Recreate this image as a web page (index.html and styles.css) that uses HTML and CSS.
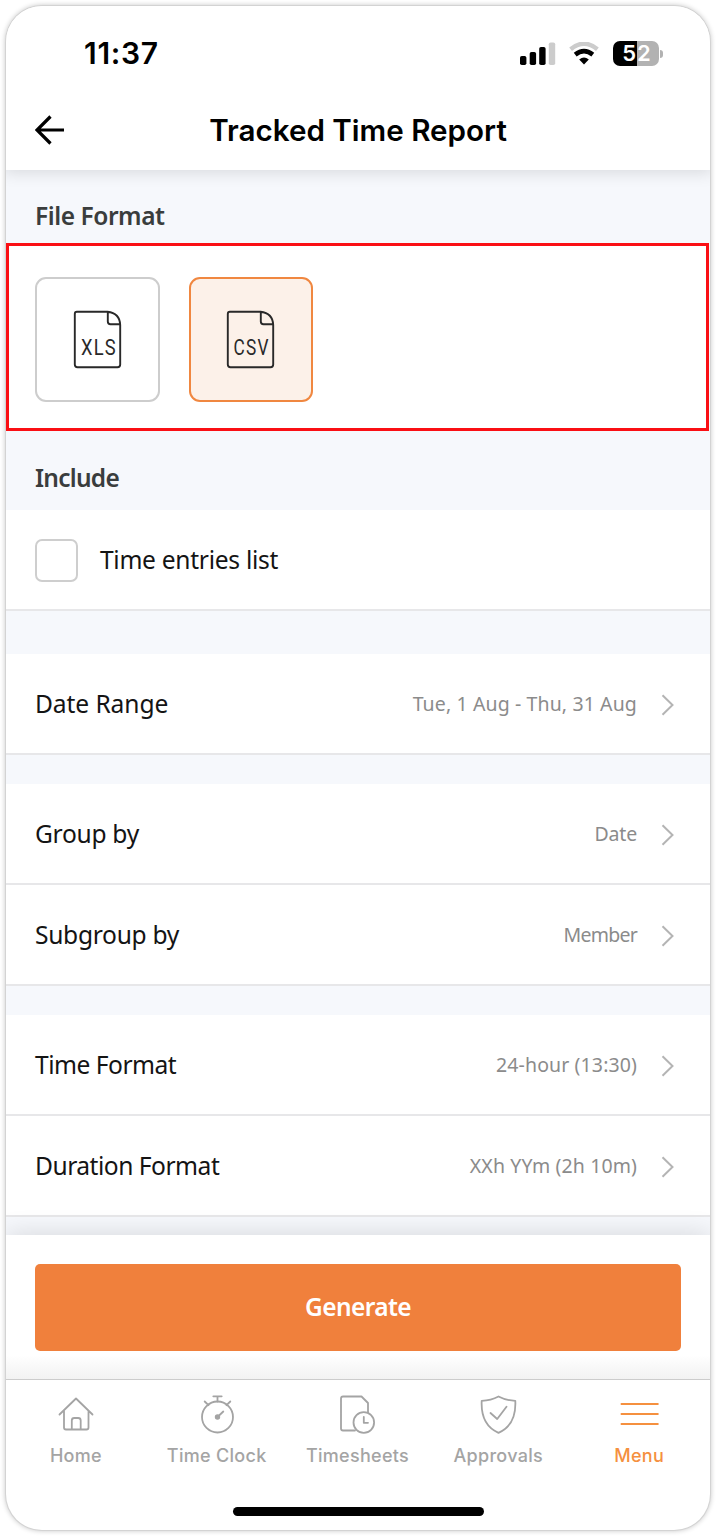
FILE: index.html
```html
<!DOCTYPE html>
<html lang="en">
<head>
<meta charset="utf-8">
<title>Tracked Time Report</title>
<link rel="stylesheet" href="styles.css">
</head>
<body>
<div class="phone">
  <header class="header">
    <div class="status">
      <span class="clock">11:37</span>
      <div class="status-icons">
        <svg width="36" height="24" viewBox="0 0 36 24"><rect x="0" y="14" width="6.4" height="9" rx="1.8"/><rect x="9.7" y="10" width="6.4" height="13" rx="1.8"/><rect x="19.2" y="5" width="6.4" height="18" rx="1.8"/><rect x="28.8" y="0.500" width="6.4" height="22.500" rx="1.8" fill="#ccc"/></svg>
        <svg class="wifi" width="30" height="24" viewBox="0 0 30 24"><path d="M1.600 7.200Q15-3.800 28.400 7.200" fill="none" stroke="#ccc" stroke-width="4.400"/><path d="M6.200 12.600Q15 5.800 23.800 12.600" fill="none" stroke="#000" stroke-width="4.600"/><path d="M10.200 17.600Q15 13.600 19.800 17.600L15 22.600Z"/></svg>
        <div class="battery"><span class="level">5</span><span class="rest">2</span></div>
        <i class="battery-cap"></i>
      </div>
    </div>
    <div class="titlebar">
      <svg class="back" width="30" height="30" viewBox="0 0 30 30"><path d="M29 15H2M15.500 1.500 2 15 15.500 28.500" fill="none" stroke="#000" stroke-width="3.200"/></svg>
      <h1 class="title">Tracked Time Report</h1>
    </div>
  </header>

  <main class="content">
    <h2 class="section section-first">File Format</h2>
    <div class="formats">
      <div class="format">
        <svg width="50" height="60" viewBox="0 0 50 60"><path d="M3.800 1.700H34.500Q46.800 3 47.200 15V54.500Q47.200 57.200 44.500 57.200H4.500Q1.800 57.200 1.800 54.500V4Q1.800 1.700 3.800 1.700ZM34.800 1.800V11.500Q34.800 14.200 37.500 14.200H47" /><text x="8" y="45.400" textLength="36" lengthAdjust="spacingAndGlyphs">XLS</text></svg>
      </div>
      <div class="format selected">
        <svg width="50" height="60" viewBox="0 0 50 60"><path d="M3.800 1.700H34.500Q46.800 3 47.200 15V54.500Q47.200 57.200 44.500 57.200H4.500Q1.800 57.200 1.800 54.500V4Q1.800 1.700 3.800 1.700ZM34.800 1.800V11.500Q34.800 14.200 37.500 14.200H47" /><text x="7.600" y="45.400" textLength="36" lengthAdjust="spacingAndGlyphs">CSV</text></svg>
      </div>
    </div>
    <h2 class="section section-include">Include</h2>
    <div class="row row-check"><i class="checkbox"></i><span class="label">Time entries list</span></div>

    <div class="group group-date">
      <div class="row"><span class="label label-date">Date Range</span><span class="value">Tue, 1 Aug - Thu, 31 Aug</span><svg class="chev" width="14" height="24" viewBox="0 0 14 24"><path d="M1.500 2.200 11.500 12 1.500 21.800"/></svg></div>
    </div>
    <div class="group">
      <div class="row"><span class="label">Group by</span><span class="value value-word">Date</span><svg class="chev" width="14" height="24" viewBox="0 0 14 24"><path d="M1.500 2.200 11.500 12 1.500 21.800"/></svg></div>
      <div class="row"><span class="label">Subgroup by</span><span class="value value-member">Member</span><svg class="chev" width="14" height="24" viewBox="0 0 14 24"><path d="M1.500 2.200 11.500 12 1.500 21.800"/></svg></div>
    </div>
    <div class="group">
      <div class="row"><span class="label label-format">Time Format</span><span class="value">24-hour (13:30)</span><svg class="chev" width="14" height="24" viewBox="0 0 14 24"><path d="M1.500 2.200 11.500 12 1.500 21.800"/></svg></div>
      <div class="row"><span class="label label-format">Duration Format</span><span class="value">XXh YYm (2h 10m)</span><svg class="chev" width="14" height="24" viewBox="0 0 14 24"><path d="M1.500 2.200 11.500 12 1.500 21.800"/></svg></div>
    </div>
  </main>

  <div class="action"><button class="generate">Generate</button></div>

  <nav class="tabs">
    <a class="tab"><svg width="40" height="40" viewBox="0 0 40 40"><path d="M3.500 19.500 20 3.500 36.500 19.500M8 16V32.500Q8 34.500 10 34.500H30.500Q32.500 34.500 32.500 32.500V16M15.800 34V25.500Q15.800 23 18.300 23H22.200Q24.700 23 24.700 25.500V34"/></svg><span>Home</span></a>
    <a class="tab"><svg width="40" height="40" viewBox="0 0 40 40"><circle cx="20.500" cy="22" r="15.500"/><path d="M20.500 6.500V1.300M16.300 1.300H24.700M7.700 6.500 11.500 10.200M33.300 6.500 29.500 10.200M20.500 22 26.300 16.500"/><circle cx="20.500" cy="22" r="1.800" fill="#a4a4a4"/></svg><span>Time Clock</span></a>
    <a class="tab"><svg width="40" height="40" viewBox="0 0 40 40"><path d="M18 35.500H6Q4 35.500 4 33.500V3.500Q4 1.500 6 1.500H24.500L31 8V17.500"/><circle cx="26.800" cy="27.500" r="10.300"/><path d="M26.800 22V27.800H31"/></svg><span>Timesheets</span></a>
    <a class="tab"><svg width="40" height="40" viewBox="0 0 40 40"><path d="M20.500 1.500Q28 5.500 37.300 5.800Q38.500 30 20.500 37.800Q2.500 30 3.700 5.800Q13 5.500 20.500 1.500ZM12.500 18 19.200 24 28.500 11.800"/></svg><span>Approvals</span></a>
    <a class="tab active"><svg width="40" height="40" viewBox="0 0 40 40"><path d="M2.500 9H38.800M2.500 19H38.800M2.500 29H38.800"/></svg><span>Menu</span></a>
  </nav>
  <div class="home-indicator"></div>
</div>
</body>
</html>
```
FILE: styles.css
```css
* { box-sizing: border-box; }
body { margin: 0; padding: 6px; background: #fff; font-family: "Noto Sans", sans-serif; color: #141414; }
.phone { width: 704px; height: 1524px; border-radius: 36px; background: #fff; overflow: hidden; display: flex; flex-direction: column; box-shadow: 0 0 0 1px #d3d3d3, 0 0 5px 1px rgba(0,0,0,.22); }
.header { height: 164px; flex: none; background: #fff; z-index: 1; box-shadow: 0 1px 15px 2px rgba(0,0,0,.12); }
.status { height: 94px; display: flex; justify-content: space-between; padding: 34px 47px 0 78px; font-family: Inter, sans-serif; }
.clock { font-size: 30px; line-height: 27px; font-weight: 600; letter-spacing: .7px; color: #000; }
.status-icons { display: flex; height: 27px; align-items: center; }
.wifi { margin: 0 14px 0 13px; }
.battery { display: flex; width: 46px; height: 25px; border-radius: 7px; overflow: hidden; color: #fff; font-size: 22px; line-height: 25px; font-weight: 600; }
.level { width: 24px; background: #000; text-align: right; padding-right: 1px; }
.rest { width: 22px; background: #b2b2b2; }
.battery-cap { width: 3px; height: 8px; margin-left: 1px; border-radius: 0 4px 4px 0; background: #b2b2b2; }
.titlebar { display: grid; grid-template-columns: 59px 1fr 59px; height: 60px; align-items: center; }
.back { margin-left: 29px; }
.title { margin: 0; text-align: center; font: 600 29.600px/40px Inter, sans-serif; color: #000; white-space: nowrap; }
.content { flex: none; height: 1065px; background: #f6f8fc; }
.section { margin: 0; padding-left: 29px; font-size: 24.500px; line-height: 34px; font-weight: 600; letter-spacing: -.45px; color: #3a3d3d; }
.section-first { height: 72.500px; padding-top: 29px; }
.section-include { height: 79px; padding-top: 30px; letter-spacing: -.75px; }
.formats { height: 188.500px; width: 703px; border: 3px solid #fa0f14; background: #fff; display: flex; gap: 29px; padding: 31.500px 26px; }
.format { width: 124.500px; height: 124.500px; border: 2px solid #cdcdcd; border-radius: 11px; display: flex; align-items: center; justify-content: center; }
.selected { border-color: #f08740; background: #fcf1e9; }
.format svg { overflow: visible; margin: 1px 0 0 1px; }
.format path { fill: none; stroke: #292929; stroke-width: 1.900; stroke-linejoin: round; }
.format text { font: 400 22px Roboto, sans-serif; letter-spacing: 1.500px; fill: #292929; }
.row { height: 101px; display: flex; align-items: center; background: #fff; border-bottom: 2px solid #e7e7e9; padding: 0 35px 0 29px; }
.checkbox { width: 43px; height: 43px; border: 2px solid #cecece; border-radius: 7px; margin: 1px 22px 0 0; }
.label { font-size: 24.600px; line-height: 34px; letter-spacing: -.3px; white-space: nowrap; }
.label-date { letter-spacing: -.1px; }
.label-format { letter-spacing: -.5px; }
.value { margin-left: auto; font-size: 19.500px; letter-spacing: .12px; color: #8b8b8b; white-space: nowrap; }
.value-word { letter-spacing: -.2px; }
.value-member { letter-spacing: -.75px; }
.chev { margin: 2px 0 0 24px; fill: none; stroke: #b4b4b4; stroke-width: 2; }
.group { margin-top: 29px; }
.group-date { margin-top: 43px; }
.action { flex: none; height: 144px; padding: 29px 29px 0; background: linear-gradient(#fff 120px, #f2f2f2); box-shadow: 0 -2px 24px rgba(0,0,0,.12); z-index: 1; }
.generate { display: block; width: 646px; height: 87px; border: 0; border-radius: 5px; background: #f0803c; color: #fff; font: 600 24.500px/34px "Noto Sans", sans-serif; letter-spacing: -.6px; padding: 0 0 1px; }
.tabs { flex: none; z-index: 2; height: 94px; display: grid; grid-template-columns: repeat(5, 140.800px); border-top: 1px solid #ccc; background: #fff; }
.tab { display: flex; flex-direction: column; align-items: center; padding: 15px 1px 0 0; color: #a4a4a4; font: 500 18px/24px Inter, sans-serif; letter-spacing: .3px; }
.tab svg { fill: none; stroke: #a4a4a4; stroke-width: 1.800; margin-bottom: 9px; stroke-linejoin: round; stroke-linecap: round; }
.active { color: #f5903f; }
.tab.active svg { stroke: #f5903f; stroke-width: 2; }
.home-indicator { flex: none; width: 251px; height: 9px; margin: 33.500px 0 0 227px; border-radius: 5px; background: #000; }
```
